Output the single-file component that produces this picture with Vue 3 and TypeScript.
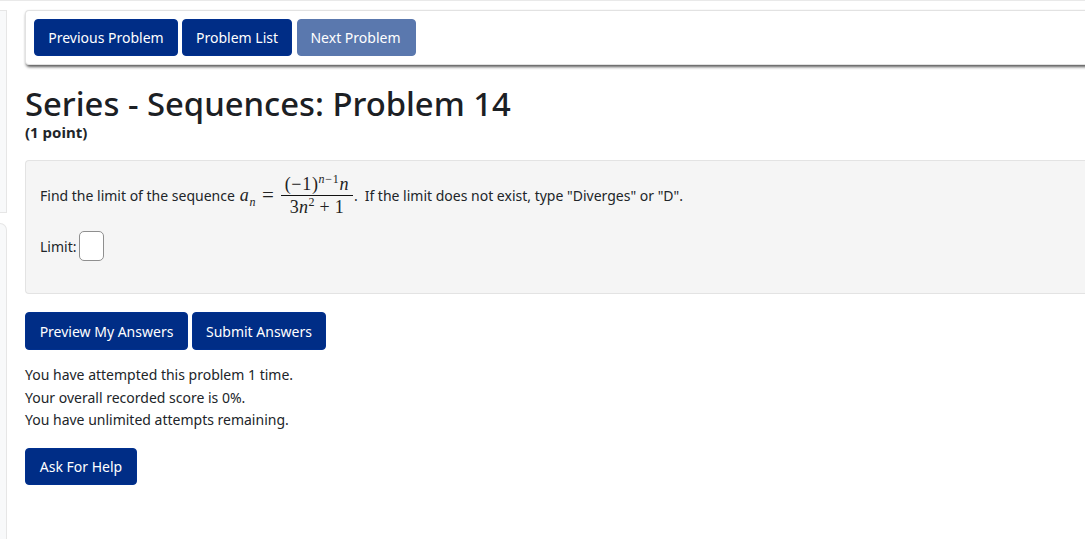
<script setup lang="ts">
const status: string[] = [
  'You have attempted this problem 1 time.',
  'Your overall recorded score is 0%.',
  'You have unlimited attempts remaining.',
]
</script>

<template>
  <div class="page">
    <aside class="side">
      <div class="side-card first"></div>
      <div class="side-card second"></div>
    </aside>
    <main class="main">
      <nav class="nav">
        <button class="btn nav-btn w1">Previous Problem</button>
        <button class="btn nav-btn w2">Problem List</button>
        <button class="btn nav-btn w3 disabled">Next Problem</button>
      </nav>
      <h1 class="title">Series - Sequences: Problem 14</h1>
      <div class="points">(1 point)</div>
      <section class="problem">
        <div class="line">
          <span>Find the limit of the sequence</span>
          <span class="math an"><i>a</i><sub><i>n</i></sub></span>
          <span class="math eq">=</span>
          <span class="math frac">
            <span class="num">(−1)<sup><i>n</i>−1</sup><i>n</i></span>
            <span class="den">3<i>n</i><sup>2</sup> + 1</span>
          </span>
          <span class="dot">.</span>
          <span>If the limit does not exist, type "Diverges" or "D".</span>
        </div>
        <div class="answer">
          <span>Limit:</span>
          <span class="input"></span>
        </div>
      </section>
      <div class="actions">
        <button class="btn a1">Preview My Answers</button>
        <button class="btn a2">Submit Answers</button>
      </div>
      <div class="status">
        <div v-for="s in status" :key="s">{{ s }}</div>
      </div>
      <button class="btn help">Ask For Help</button>
    </main>
  </div>
</template>

<style scoped>
.page {
  display: flex;
  width: 1085px;
  height: 539px;
  overflow: hidden;
  box-sizing: border-box;
  border-top: 1px solid #e9e9e9;
  font-family: "Noto Sans", "Open Sans", sans-serif;
  color: #212529;
  background: #fff;
}
.side {
  width: 7px;
  flex: none;
  display: flex;
  flex-direction: column;
  gap: 10px;
  padding-top: 9px;
}
.side-card {
  flex: none;
  box-sizing: border-box;
  background: #f8f9fa;
  border: 1px solid #e6e6e6;
  border-left: none;
}
.side-card.first { height: 203px; }
.side-card.second { height: 330px; border-top-right-radius: 8px; }
.main {
  flex: none;
  width: 1078px;
  padding: 9px 0 0 18px;
  box-sizing: border-box;
}
.nav {
  display: flex;
  gap: 4px;
  height: 55px;
  width: 1075px;
  box-sizing: border-box;
  padding: 8px 0 0 8px;
  border: 1px solid #e2e2e2;
  border-right: none;
  border-radius: 4px 0 0 4px;
  box-shadow: 1px 2px 3px rgba(0, 0, 0, 0.65);
  background: #fff;
}
.btn {
  display: block;
  box-sizing: border-box;
  margin: 0;
  padding: 0;
  height: 37px;
  font-family: inherit;
  font-size: 14px;
  line-height: 20px;
  text-align: center;
  color: #fff;
  background: #002d86;
  border: 1px solid #00308f;
  border-radius: 4px;
}
.w1 { width: 144px; }
.w2 { width: 110px; }
.w3 { width: 119px; margin-left: 1px; padding-right: 2px; }
.disabled { background: #5a78ae; border-color: #5a78ae; }
.title {
  margin: 21px 0 0;
  font-size: 32.8px;
  line-height: 36px;
  font-weight: 500;
  color: #1c2024;
  white-space: nowrap;
}
.points {
  margin-top: 2px;
  font-size: 15px;
  font-weight: 700;
  line-height: 16px;
}
.problem {
  width: 1070px;
  height: 134px;
  margin-top: 20px;
  box-sizing: border-box;
  padding: 11px 0 0 14px;
  background: #f5f5f5;
  border: 1px solid #e3e3e3;
  border-right: none;
  border-radius: 4px 0 0 4px;
  font-size: 14px;
}
.line {
  display: flex;
  align-items: center;
  height: 46px;
  white-space: pre;
}
.math { font-family: "Liberation Serif", serif; color: #222; }
.math sub, .math sup { font-size: 12px; line-height: 0; }
.an { margin-left: 5px; font-size: 18px; letter-spacing: 0.6px; }
.eq { margin: 0 7px 0 6px; font-size: 21px; }
.frac {
  display: inline-flex;
  flex-direction: column;
  align-items: center;
  font-size: 18px;
  line-height: 20px;
  width: 72px;
}
.num {
  border-bottom: 1px solid #111;
  width: 100%;
  text-align: center;
  padding-bottom: 1px;
  letter-spacing: 0.7px;
}
.den { padding-top: 1px; letter-spacing: 0.3px; }
.dot { margin: 0 7px 0 1px; }
.answer {
  display: flex;
  align-items: center;
  gap: 3px;
  margin-top: 13px;
}
.input {
  display: block;
  width: 25px;
  height: 30px;
  box-sizing: border-box;
  background: #fff;
  border: 1px solid #8f8f8f;
  border-radius: 5px;
}
.actions {
  display: flex;
  gap: 4px;
  margin-top: 18px;
}
.a1, .a2, .help { padding-top: 2px; }
.a1 { width: 163px; height: 38px; }
.a2 { width: 134px; height: 38px; }
.status {
  margin-top: 14px;
  font-size: 14px;
  line-height: 22.5px;
}
.help { width: 112px; margin-top: 16px; }
</style>
